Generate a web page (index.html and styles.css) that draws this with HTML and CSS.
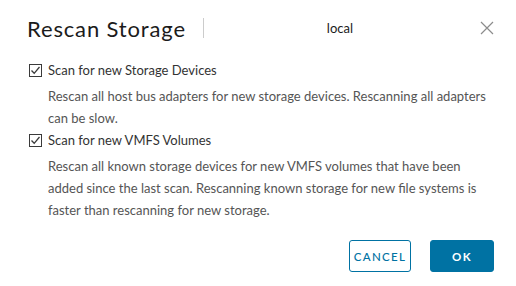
FILE: index.html
```html
<!DOCTYPE html>
<html>
<head>
<meta charset="utf-8">
<link rel="stylesheet" href="styles.css">
</head>
<body>
<div class="dialog">
  <div class="header">
    <div class="title">Rescan Storage</div>
    <div class="divider"></div>
    <div class="subtitle">local</div>
    <svg class="close" width="14" height="14" viewBox="0 0 14 14"><path d="M1 1 L13 13 M13 1 L1 13" stroke="#8c8c8c" stroke-width="1.2" fill="none"/></svg>
  </div>
  <div class="body">
    <label class="option">
      <svg class="check" width="13" height="13" viewBox="0 0 13 13"><rect x="0.5" y="0.5" width="12" height="12" fill="#fff" stroke="#3a3a3a" stroke-width="1"/><path d="M2.5 6.5 L5.2 9.3 L10.5 3" stroke="#3a3a3a" stroke-width="1.3" fill="none"/></svg>
      <span>Scan for new Storage Devices</span>
    </label>
    <p class="desc">Rescan all host bus adapters for new storage devices. Rescanning all adapters can be slow.</p>
    <label class="option">
      <svg class="check" width="13" height="13" viewBox="0 0 13 13"><rect x="0.5" y="0.5" width="12" height="12" fill="#fff" stroke="#3a3a3a" stroke-width="1"/><path d="M2.5 6.5 L5.2 9.3 L10.5 3" stroke="#3a3a3a" stroke-width="1.3" fill="none"/></svg>
      <span>Scan for new VMFS Volumes</span>
    </label>
    <p class="desc">Rescan all known storage devices for new VMFS volumes that have been added since the last scan. Rescanning known storage for new file systems is faster than rescanning for new storage.</p>
  </div>
  <div class="footer">
    <button class="btn btn-outline">CANCEL</button>
    <button class="btn btn-primary">OK</button>
  </div>
</div>
</body>
</html>
```
FILE: styles.css
```css
html, body { margin: 0; padding: 0; background: #fff; }
body { font-family: Lato, "Open Sans", sans-serif; width: 516px; height: 286px; overflow: hidden; }
.dialog { padding: 14px 22px 0 27px; }
.header { display: flex; align-items: center; height: 28px; }
.title { font-size: 22px; color: #1b1b1b; letter-spacing: 0.85px; }
.divider { width: 1px; height: 20px; background: #ccc; margin-left: 17px; }
.subtitle { font-size: 13px; color: #1b1b1b; margin-left: 123px; flex: 1; }
.body { padding: 20px 0 0 2px; }
.option { display: flex; align-items: center; gap: 6px; font-size: 13px; color: #333; height: 16px; }
.desc { margin: 7px 0 3px 19px; font-size: 13px; line-height: 22px; color: #555; }
.footer { display: flex; justify-content: flex-end; gap: 19px; padding-top: 16px; }
.btn { height: 32px; font-family: inherit; font-size: 11.5px; letter-spacing: 1.3px; border-radius: 3px; padding: 0; font-weight: 500; }
.btn-outline { width: 62px; background: #fff; color: #0072a3; border: 1px solid #0072a3; }
.btn-primary { width: 64px; background: #0072a3; color: #fff; border: 1px solid #0072a3; font-weight: 700; }
```
